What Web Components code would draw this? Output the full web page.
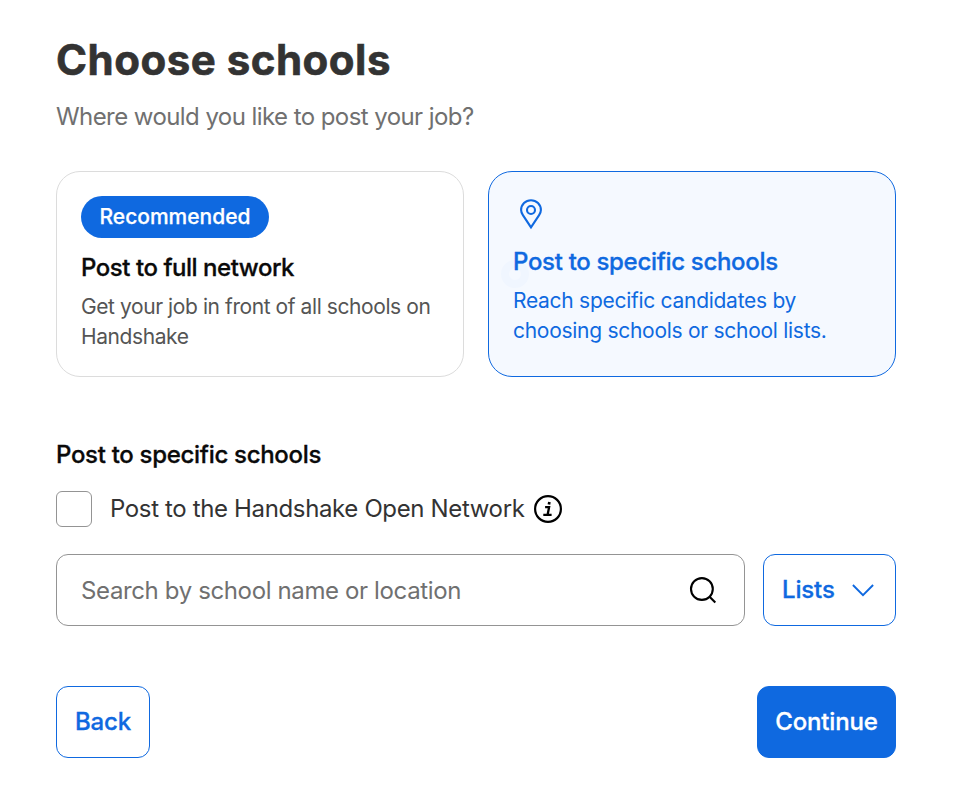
<!DOCTYPE html>
<html lang="en">
<head>
<meta charset="utf-8">
<title>Choose schools</title>
<style>
body {
    margin: 0;
    background: #fff;
    font-family: Inter, "Liberation Sans", sans-serif;
}
</style>
</head>
<body>
<choose-schools></choose-schools>

<script>
const blue = '#0f69e0'

class PostOption extends HTMLElement {
    constructor() {
        super()
        this.attachShadow({ mode: 'open' })
    }
    connectedCallback() {
        this.shadowRoot.innerHTML = `
        <style>
        :host {
            display: flex;
            flex: 1 1 0;
            min-width: 0;
            flex-direction: column;
            align-items: flex-start;
            box-sizing: border-box;
            height: 206px;
            padding: 24px;
            border: 1px solid #dcdcdc;
            border-radius: 24px;
            color: #555;
            position: relative;
        }
        :host([selected]) {
            border-color: ${blue};
            background: #f5f9ff;
            color: ${blue};
        }
        .radio {
            display: none;
            position: absolute;
            left: 12px;
            top: 88px;
            width: 12px;
            height: 12px;
            border: 8px solid #f0f6ff;
            border-radius: 50%;
        }
        :host([selected]) .radio { display: block; }
        .title {
            position: relative;
            margin: 12px 0 6px;
            font-size: 24px;
            line-height: 36px;
            font-weight: 500;
            -webkit-text-stroke: 0.3px;
            letter-spacing: var(--title-spacing, 0);
            color: #0a0a0a;
        }
        :host([selected]) .title { color: ${blue}; }
        .text {
            position: relative;
            font-size: 21px;
            line-height: 30px;
            letter-spacing: var(--text-spacing, 0);
            white-space: nowrap;
        }
        </style>
        <span class="radio"></span>
        <slot name="top"></slot>
        <div class="title"><slot name="title"></slot></div>
        <div class="text"><slot></slot></div>
        `
    }
}
customElements.define('post-option', PostOption)

class PillBadge extends HTMLElement {
    constructor() {
        super()
        this.attachShadow({ mode: 'open' })
    }
    connectedCallback() {
        this.shadowRoot.innerHTML = `
        <style>
        :host {
            display: flex;
            align-items: center;
            justify-content: center;
            box-sizing: border-box;
            width: 188px;
            height: 42px;
            padding-bottom: 1px;
            border-radius: 21px;
            background: ${blue};
            color: #fff;
            font-size: 21px;
            font-weight: 500;
            -webkit-text-stroke: 0.25px;
        }
        </style>
        <slot></slot>
        `
    }
}
customElements.define('pill-badge', PillBadge)

const icons = {
    pin: `<svg width="36" height="36" viewBox="0 0 36 36" fill="none" stroke="currentColor" stroke-width="2.1">
        <path d="M18 31.4 L9.9 19.1 C8.4 16.9 8.1 15.4 8.1 14.1 A9.9 9.9 0 0 1 27.9 14.1 C27.9 15.4 27.6 16.9 26.1 19.1 Z"/>
        <circle cx="18" cy="14" r="4"/></svg>`,
    info: `<svg width="30" height="30" viewBox="0 0 30 30" fill="none" stroke="currentColor">
        <circle cx="15" cy="15" r="12.9" stroke-width="2.2"/>
        <path d="M12.1 13.2 H16.1 L14.6 20.8 M10.3 20.9 H18.6" stroke-width="2.3"/>
        <path d="M16.4 8 L15.9 10.5" stroke-width="2.7"/></svg>`,
    search: `<svg width="30" height="30" viewBox="0 0 30 30" fill="none" stroke="currentColor" stroke-width="2.1">
        <circle cx="13.9" cy="14" r="10.9"/><path d="M21.6 21.7 L27.3 27.4"/></svg>`,
    chevron: `<svg width="24" height="24" viewBox="0 0 24 24" fill="none" stroke="currentColor" stroke-width="1.9">
        <path d="M1.9 7 L12 17.1 L22.1 7"/></svg>`
}

class UiIcon extends HTMLElement {
    constructor() {
        super()
        this.attachShadow({ mode: 'open' })
    }
    connectedCallback() {
        this.shadowRoot.innerHTML = `
        <style>
        :host { display: block; flex: none; }
        svg { display: block; }
        </style>
        ${icons[this.getAttribute('name')]}
        `
    }
}
customElements.define('ui-icon', UiIcon)

class UiButton extends HTMLElement {
    constructor() {
        super()
        this.attachShadow({ mode: 'open' })
    }
    connectedCallback() {
        this.shadowRoot.innerHTML = `
        <style>
        :host { display: block; flex: none; height: 72px; }
        button {
            display: flex;
            align-items: center;
            justify-content: center;
            gap: 15px;
            box-sizing: border-box;
            width: 100%;
            height: 100%;
            padding: 0;
            border: 1px solid ${blue};
            border-radius: 12px;
            background: #fff;
            color: ${blue};
            font: 500 24px Inter, "Liberation Sans", sans-serif;
            letter-spacing: -0.15px;
            -webkit-text-stroke: 0.3px;
        }
        .label { padding-bottom: 2px; }
        :host([menu]) button {
            justify-content: flex-start;
            padding-left: 18px;
            gap: 16px;
        }
        :host([primary]) button {
            background: ${blue};
            color: #fff;
        }
        </style>
        <button><span class="label"><slot></slot></span><slot name="icon"></slot></button>
        `
        // no empty flex item beside the label when there is no icon
        if (!this.querySelector('[slot=icon]')) {
            this.shadowRoot.querySelector('slot[name=icon]').remove()
        }
    }
}
customElements.define('ui-button', UiButton)

class SearchField extends HTMLElement {
    constructor() {
        super()
        this.attachShadow({ mode: 'open' })
    }
    connectedCallback() {
        this.shadowRoot.innerHTML = `
        <style>
        :host {
            display: flex;
            flex: 1;
            align-items: center;
            justify-content: space-between;
            box-sizing: border-box;
            height: 72px;
            padding: 0 26px 0 24px;
            border: 1px solid #949494;
            border-radius: 12px;
            font-size: 24px;
            letter-spacing: -0.37px;
            color: #707070;
        }
        ui-icon { color: #000; }
        </style>
        <span><slot></slot></span>
        <ui-icon name="search"></ui-icon>
        `
    }
}
customElements.define('search-field', SearchField)

class ChooseSchools extends HTMLElement {
    constructor() {
        super()
        this.attachShadow({ mode: 'open' })
    }
    connectedCallback() {
        this.shadowRoot.innerHTML = `
        <style>
        :host {
            display: block;
            box-sizing: border-box;
            width: 972px;
            height: 792px;
            padding: 34px 76px 0 56px;
        }
        h1 {
            margin: 0;
            font-size: 42px;
            line-height: 52px;
            font-weight: 700;
            letter-spacing: 0.5px;
            -webkit-text-stroke: 0.6px;
            color: #333;
        }
        .lead {
            margin: 13px 0 36px;
            font-size: 24px;
            line-height: 36px;
            letter-spacing: -0.57px;
            color: #707070;
        }
        .options { display: flex; gap: 24px; }
        .network { --title-spacing: -0.46px; --text-spacing: -0.42px; }
        .specific { --title-spacing: -0.32px; --text-spacing: -0.28px; }
        h2 {
            margin: 60px 0 18px;
            font-size: 24px;
            line-height: 36px;
            font-weight: 500;
            letter-spacing: -0.31px;
            -webkit-text-stroke: 0.3px;
            color: #0a0a0a;
        }
        .check {
            display: flex;
            align-items: center;
            height: 36px;
            font-size: 24px;
            letter-spacing: -0.36px;
            color: #333;
        }
        .check .label { padding-bottom: 2px; }
        .box {
            box-sizing: border-box;
            width: 36px;
            height: 36px;
            margin-right: 18px;
            border: 1.5px solid #949494;
            border-radius: 6px;
        }
        .check ui-icon { margin-left: 8px; color: #000; }
        .find { display: flex; gap: 18px; margin-top: 27px; }
        .actions { display: flex; justify-content: space-between; margin-top: 60px; }
        .lists { width: 133px; }
        .back { width: 94px; }
        .continue { width: 139px; }
        </style>
        <h1><span>Choose schools</span></h1>
        <div class="lead"><span>Where would you like to post your job?</span></div>
        <div class="options">
            <post-option class="network">
                <pill-badge slot="top">Recommended</pill-badge>
                <span slot="title">Post to full network</span>
                Get your job in front of all schools on<br>Handshake
            </post-option>
            <post-option class="specific" selected>
                <ui-icon slot="top" name="pin"></ui-icon>
                <span slot="title">Post to specific schools</span>
                Reach specific candidates by<br>choosing schools or school lists.
            </post-option>
        </div>
        <h2><span>Post to specific schools</span></h2>
        <div class="check">
            <span class="box"></span>
            <span class="label">Post to the Handshake Open Network</span>
            <ui-icon name="info"></ui-icon>
        </div>
        <div class="find">
            <search-field>Search by school name or location</search-field>
            <ui-button class="lists" menu>Lists<ui-icon slot="icon" name="chevron"></ui-icon></ui-button>
        </div>
        <div class="actions">
            <ui-button class="back">Back</ui-button>
            <ui-button class="continue" primary>Continue</ui-button>
        </div>
        `
    }
}
customElements.define('choose-schools', ChooseSchools)
</script>
</body>
</html>
